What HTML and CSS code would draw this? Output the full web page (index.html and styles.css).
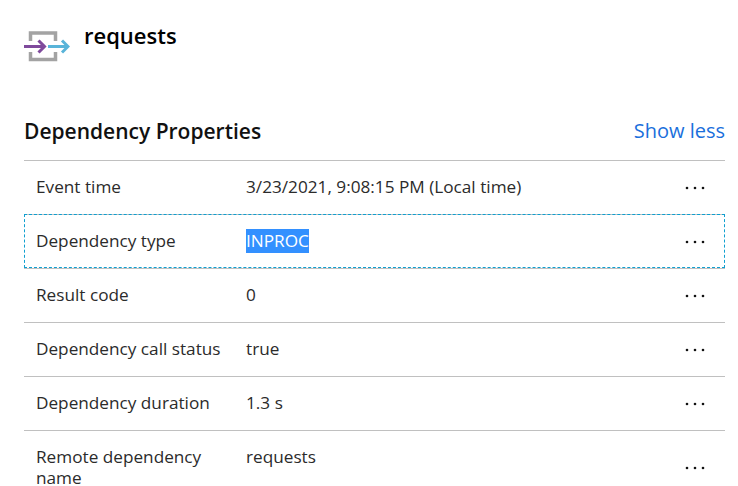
FILE: index.html
```html
<!DOCTYPE html>
<html lang="en">
<head>
<meta charset="utf-8">
<title>requests</title>
<link rel="stylesheet" href="styles.css">
</head>
<body>
<header class="head">
  <svg class="logo" width="46" height="31" viewBox="0 0 46 31" aria-hidden="true">
    <path d="M6.500 10V2H31.500V10M6.500 21V28.500H31.500V21" fill="none" stroke="#a3a3a3" stroke-width="3.500"/>
    <path d="M0 15.500H20" stroke="#7f4a9c" stroke-width="3"/>
    <path d="M14.500 9.500L20.500 15.500L14.500 21.500" fill="none" stroke="#7f4a9c" stroke-width="3"/>
    <path d="M24 15.500H43" stroke="#59b4d9" stroke-width="3"/>
    <path d="M38 9.500L44 15.500L38 21.500" fill="none" stroke="#59b4d9" stroke-width="3"/>
  </svg>
  <h1 class="title">requests</h1>
</header>
<section class="props">
  <div class="props-head">
    <h2 class="props-title">Dependency Properties</h2>
    <a class="toggle" href="#">Show less</a>
  </div>
  <div class="row"><div class="key">Event time</div><div class="val">3/23/2021, 9:08:15 PM (Local time)</div><svg class="more" width="20" height="4" viewBox="0 0 20 4" aria-hidden="true"><circle cx="2" cy="2" r="1.300"/><circle cx="10" cy="2" r="1.300"/><circle cx="18" cy="2" r="1.300"/></svg></div>
  <div class="row focus"><div class="key">Dependency type</div><div class="val"><span class="sel">INPROC</span></div><svg class="more" width="20" height="4" viewBox="0 0 20 4" aria-hidden="true"><circle cx="2" cy="2" r="1.300"/><circle cx="10" cy="2" r="1.300"/><circle cx="18" cy="2" r="1.300"/></svg></div>
  <div class="row"><div class="key">Result code</div><div class="val">0</div><svg class="more" width="20" height="4" viewBox="0 0 20 4" aria-hidden="true"><circle cx="2" cy="2" r="1.300"/><circle cx="10" cy="2" r="1.300"/><circle cx="18" cy="2" r="1.300"/></svg></div>
  <div class="row"><div class="key">Dependency call status</div><div class="val">true</div><svg class="more" width="20" height="4" viewBox="0 0 20 4" aria-hidden="true"><circle cx="2" cy="2" r="1.300"/><circle cx="10" cy="2" r="1.300"/><circle cx="18" cy="2" r="1.300"/></svg></div>
  <div class="row"><div class="key">Dependency duration</div><div class="val">1.3 s</div><svg class="more" width="20" height="4" viewBox="0 0 20 4" aria-hidden="true"><circle cx="2" cy="2" r="1.300"/><circle cx="10" cy="2" r="1.300"/><circle cx="18" cy="2" r="1.300"/></svg></div>
  <div class="row tall"><div class="key">Remote dependency name</div><div class="val">requests</div><svg class="more" width="20" height="4" viewBox="0 0 20 4" aria-hidden="true"><circle cx="2" cy="2" r="1.300"/><circle cx="10" cy="2" r="1.300"/><circle cx="18" cy="2" r="1.300"/></svg></div>
</section>
</body>
</html>
```
FILE: styles.css
```css
* { box-sizing: border-box; }
html, body { height: 100%; overflow: hidden; }
body {
  margin: 0;
  padding: 20px 13px 0 24px;
  font-family: "Open Sans", "Noto Sans", sans-serif;
  color: #1a1a1a;
  background: #fff;
}
.head { display: flex; align-items: flex-start; height: 89px; }
.logo { margin-top: 11px; flex: none; }
.title { margin: 0 0 0 14px; font-size: 22px; line-height: 30px; font-weight: 570; color: #000; }
.props-head {
  display: flex;
  justify-content: space-between;
  align-items: flex-start;
  height: 52px;
  padding-top: 7px;
  border-bottom: 1px solid #c0c0c0;
}
.props-title { margin: 0; font-size: 21px; line-height: 30px; font-weight: 570; color: #111; }
.toggle { font-size: 20px; line-height: 30px; color: #1a6fdc; text-decoration: none; font-weight: 370; }
.row {
  display: flex;
  align-items: center;
  position: relative;
  height: 54px;
  padding: 0 20px 2px 12px;
  border-bottom: 1px solid #c0c0c0;
  font-size: 17.200px;
  line-height: 22px;
  font-weight: 370;
  color: #2b2b2b;
}
.key { width: 210px; flex: none; padding-right: 4px; }
.val { flex: 1; }
.more { flex: none; fill: #111; position: relative; top: 1px; }
.focus::after {
  content: "";
  position: absolute;
  inset: -1px 0 0;
  border: 1px dashed #0f9fd0;
}
.sel { background: #3390ff; color: #fff; display: inline-block; line-height: 24px; vertical-align: top; }
.tall { height: 76px; align-items: flex-start; padding-top: 15px; line-height: 21px; }
.tall .more { margin-top: 19px; }
```
